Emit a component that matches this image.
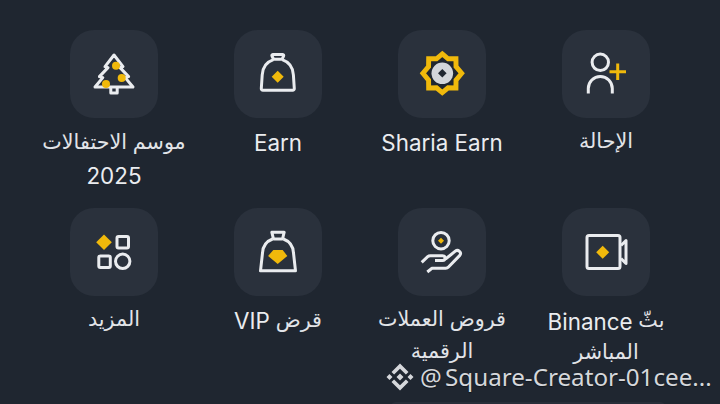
<script>
  const yellow = '#f0b90b';
</script>

<main dir="rtl">
  <div class="grid">
    <div class="item">
      <div class="tile">
        <svg viewBox="0 0 88 88">
          <circle cx="38.3" cy="32.3" r="8.2" />
          <path d="M26.3 63.5v-5a12 12 0 0 1 24 0v5" />
          <path class="y" d="M47.5 41.7h16.5M55.7 33.5v16.5" />
        </svg>
      </div>
      <span class="ar">الإحالة</span>
    </div>

    <div class="item">
      <div class="tile">
        <svg viewBox="0 0 88 88">
          <path class="star" transform="translate(44.3 43.3) scale(.88) translate(-44.3 -43.3)" d="M44.3 21.3l6.6 5.5 8.9-.1.1 8.9 6.4 7.7-6.4 7.7-.1 8.9-8.9-.1-6.6 5.5-6.6-5.5-8.9.1-.1-8.9-6.4-7.7 6.4-7.7.1-8.9 8.9.1z" />
          <circle class="disc" cx="44.3" cy="43.3" r="10.8" />
          <path class="hole" d="M44.3 39l4.3 4.3-4.3 4.3-4.3-4.3z" />
        </svg>
      </div>
      <span>Sharia Earn</span>
    </div>

    <div class="item">
      <div class="tile">
        <svg viewBox="0 0 88 88">
          <path d="M38.8 24.5h10a1 1 0 0 1 .8 1.5l-1.5 3.2h-8.6L38 26a1 1 0 0 1 .8-1.5z" />
          <path d="M39.4 29.6C32.5 32 28.5 38 28.2 45l-.9 13.5a1.6 1.6 0 0 0 1.6 1.7h29.8a1.6 1.6 0 0 0 1.6-1.7L59.4 45c-.3-7-4.3-13-11.2-15.4" />
          <path class="fill" d="M43.7 40.7l6 6-6 6-6-6z" />
        </svg>
      </div>
      <span>Earn</span>
    </div>

    <div class="item">
      <div class="tile">
        <svg viewBox="0 0 88 88">
          <path d="M44 25l9 11.6-3 1 8.6 9-3.4 1L63 57H25l7.8-9.4-3.4-1 8.6-9-3-1z" />
          <path d="M40.8 57.5v5.6h6.4v-5.6" />
          <circle class="fill" cx="46" cy="35.7" r="4" />
          <circle class="fill" cx="51.7" cy="48" r="4" />
          <circle class="fill" cx="36" cy="54" r="4" />
        </svg>
      </div>
      <span class="ar tall">موسم الاحتفالات <b>2025</b></span>
    </div>

    <div class="item">
      <div class="tile">
        <svg viewBox="0 0 88 88">
          <rect x="25" y="27.5" width="33" height="33" rx="2" />
          <path d="M59 37.5l5-5v23l-5-5" />
          <path class="fill" d="M40.7 37.8l6.5 6.5-6.5 6.5-6.5-6.5z" />
        </svg>
      </div>
      <span class="ar">بثّ <i class="low">Binance</i> المباشر</span>
    </div>

    <div class="item">
      <div class="tile">
        <svg viewBox="0 0 88 88">
          <circle cx="43" cy="32.7" r="8.2" />
          <path class="fill" d="M43 29.7l3 3-3 3-3-3z" />
          <path d="M23.7 54.3l6-5.6a4 4 0 0 1 2.6-1h12.2c3.4 0 3.4 4.8 0 4.8H37" />
          <path d="M47.5 51l9.8-7.8c2.8-2.2 6.8 1 4.5 4.2L50.5 59a4 4 0 0 1-2.8 1.3H34l-4.7 3.7" />
        </svg>
      </div>
      <span class="ar">قروض العملات الرقمية</span>
    </div>

    <div class="item">
      <div class="tile">
        <svg viewBox="0 0 88 88">
          <path d="M37.8 24.2h12.4l-1.7 6.8h-9z" />
          <path d="M38.5 31C32 33.5 28.8 39 28.5 45L26.5 62.8h35L59.5 45c-.3-6-3.5-11.5-10-14" />
          <path class="fill" d="M39.3 42h9.4l4.6 6-9.6 8-9.6-8z" />
        </svg>
      </div>
      <span class="ar">قرض <i>VIP</i></span>
    </div>

    <div class="item">
      <div class="tile">
        <svg viewBox="0 0 88 88">
          <path class="fill" d="M34 26.5l7.8 7.8-7.8 7.8-7.8-7.8z" />
          <rect x="47" y="28.5" width="11.5" height="11.5" rx="1.5" />
          <rect x="28.8" y="48" width="11.5" height="11.5" rx="1.5" />
          <circle cx="52.7" cy="53.3" r="7.2" />
        </svg>
      </div>
      <span class="ar">المزيد</span>
    </div>
  </div>

  <div class="mark" dir="ltr">
    <svg class="logo" viewBox="0 0 28 28">
      <path d="M14 .5l8.5 8.5-2.6 2.6L14 5.7l-5.900 5.900L5.500 9zM3.500 11l3 3-3 3-3-3zM24.500 11l3 3-3 3-3-3zM14 10.500l3.500 3.500-3.500 3.500-3.500-3.500zM14 27.500L5.500 19l2.600-2.600 5.900 5.900 5.900-5.900 2.600 2.600z" />
    </svg>
    <span>@ Square-Creator-01cee...</span>
  </div>
  <div class="strip"></div>
</main>

<style>
  :global(body) {
    margin: 0;
    background: #1f2630;
  }
  main {
    position: relative;
    width: 720px;
    height: 404px;
    overflow: hidden;
    background: #1f2630;
    font-family: Inter, "Noto Sans", "DejaVu Sans", sans-serif;
  }
  .grid {
    display: grid;
    grid-template-columns: repeat(4, 164px);
    grid-auto-rows: 178px;
    padding: 30px 32px 0;
  }
  .item {
    display: flex;
    flex-direction: column;
    align-items: center;
    text-align: center;
  }
  .tile {
    width: 88px;
    height: 88px;
    flex: none;
    border-radius: 24px;
    background: #2a313c;
  }
  .tile svg {
    display: block;
    width: 88px;
    height: 88px;
    fill: none;
    stroke: #eaecef;
    stroke-width: 3;
    stroke-linejoin: round;
  }
  .tile svg .y {
    stroke: #f0b90b;
    stroke-width: 3;
  }
  .tile svg .fill {
    fill: #f0b90b;
    stroke: none;
  }
  .tile svg .star {
    fill: #1f2630;
    stroke: #f0b90b;
    stroke-width: 5.6;
    stroke-linejoin: miter;
  }
  .tile svg .disc {
    fill: #d2d5da;
    stroke: none;
  }
  .tile svg .hole {
    fill: #1f2630;
    stroke: none;
  }
  .item span {
    width: 164px;
    margin-top: 8px;
    font-size: 22.4px;
    line-height: 33px;
    color: #eaecef;
  }
  .item span.ar {
    margin-top: 7px;
    font-size: 20.7px;
    line-height: 32px;
    color: #e2e4e8;
  }
  .item span.tall {
    line-height: 34px;
  }
  .item span i,
  .item span b {
    font-style: normal;
    font-weight: 400;
    font-size: 22.4px;
    color: #eaecef;
  }
  .item span i {
    position: relative;
    top: 1.5px;
  }
  .item span i.low {
    top: 2.5px;
  }
  .mark {
    position: absolute;
    left: 386px;
    top: 362px;
    display: flex;
    align-items: center;
    gap: 6px;
    color: #d5d7db;
    font-family: "Noto Sans", sans-serif;
    font-size: 24.2px;
    word-spacing: -3px;
    line-height: 30px;
    white-space: nowrap;
    text-shadow: 0 1px 1px rgba(0, 0, 0, 0.4);
  }
  .logo {
    width: 28px;
    height: 28px;
    fill: #d5d7db;
  }
  .strip {
    position: absolute;
    left: 390px;
    width: 276px;
    top: 402px;
    height: 12px;
    border-radius: 8px;
    background: #282e39;
  }
</style>
